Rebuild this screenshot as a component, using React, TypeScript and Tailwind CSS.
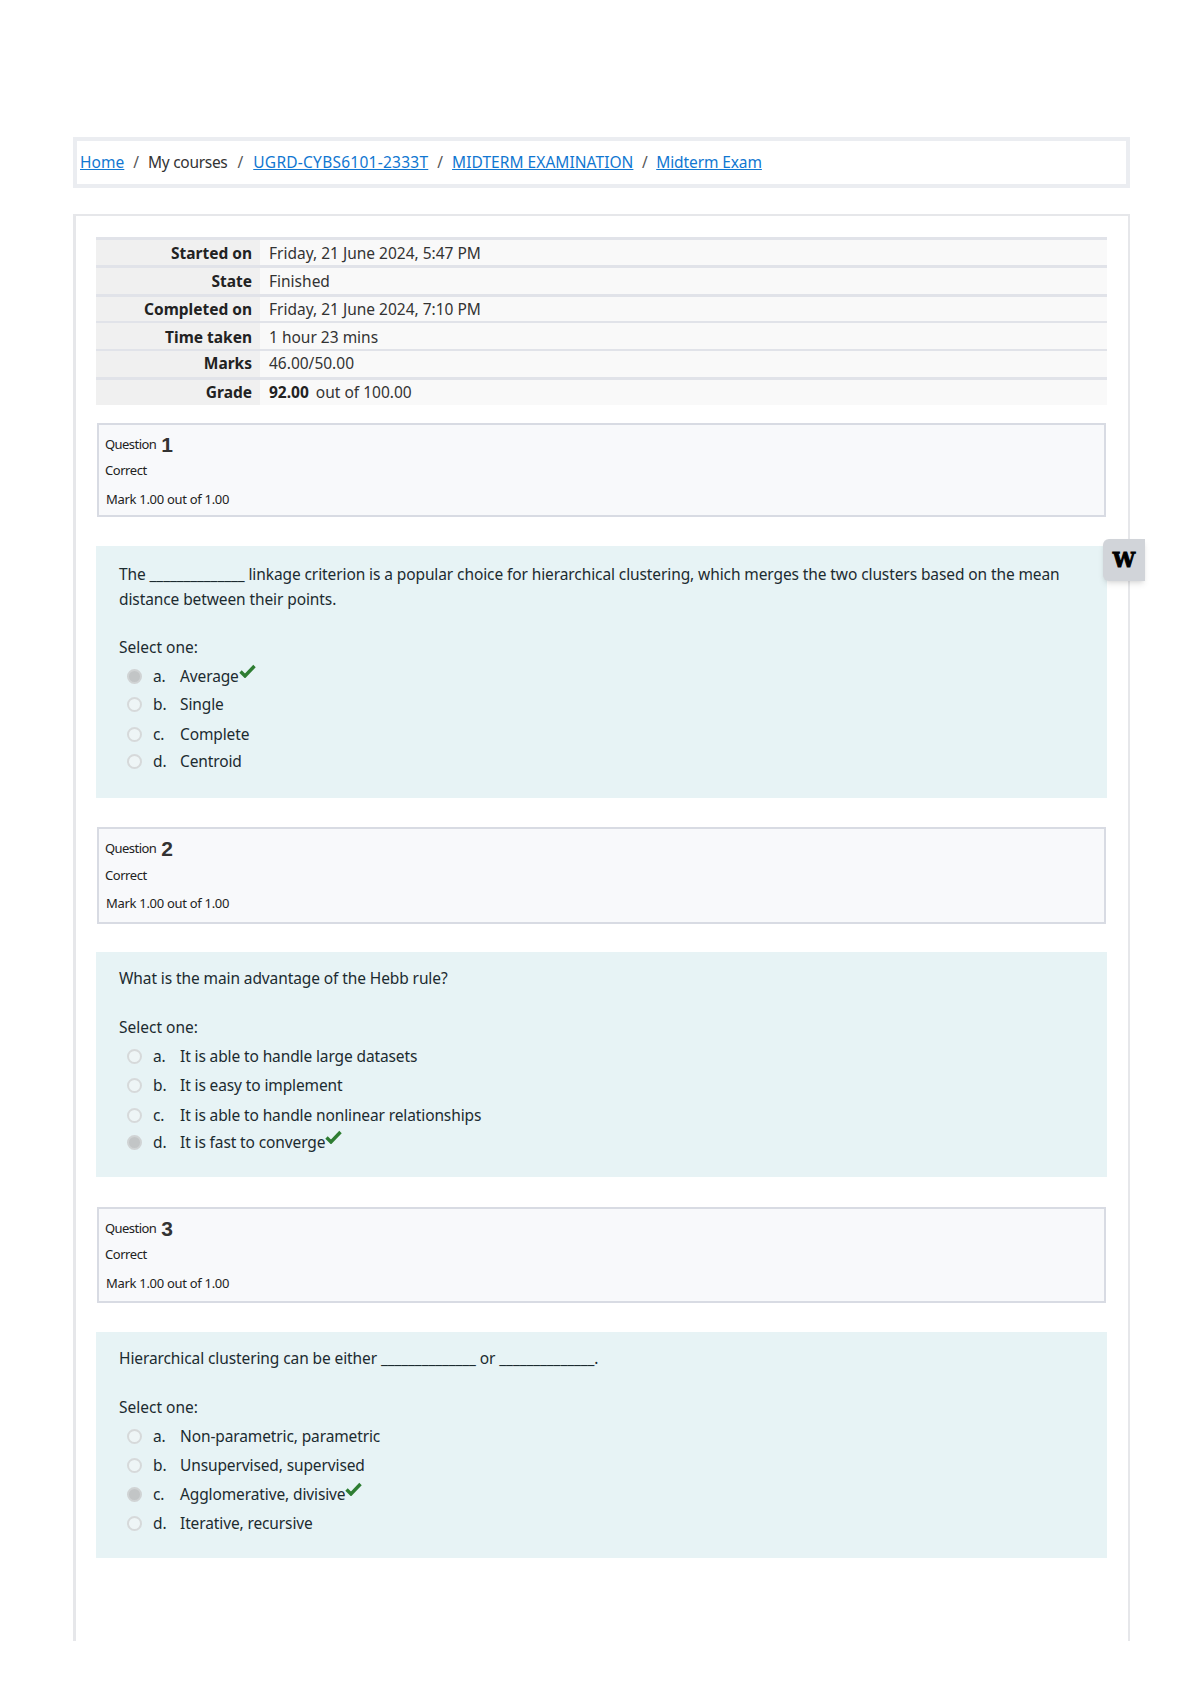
const summary = [
  { label: 'Started on', value: 'Friday, 21 June 2024, 5:47 PM', h: 'h-[28px]', border: 'border-t-[3px]', nudge: 'pt-[2px]' },
  { label: 'State', value: 'Finished', h: 'h-[29px]', border: 'border-t-[3px]', nudge: 'pt-[1px]' },
  { label: 'Completed on', value: 'Friday, 21 June 2024, 7:10 PM', h: 'h-[27px]', border: 'border-t-[3px]', nudge: 'pt-[2px]' },
  { label: 'Time taken', value: '1 hour 23 mins', h: 'h-[28px]', border: 'border-t-[2px]', nudge: 'pt-[3px]' },
  { label: 'Marks', value: '46.00/50.00', h: 'h-[28px]', border: 'border-t-[2px]', nudge: 'pt-0' },
  { label: 'Grade', value: 'grade', h: 'h-[28px]', border: 'border-t-[3px]', nudge: 'pt-0' },
];

const questions = [
  {
    num: 1,
    boxH: 'h-[94px]',
    textH: 'h-[252px]',
    gap: 'mt-[29px] mb-[29px]',
    pad: 'pt-[16px]',
    correctLine: 'h-[26px] leading-[24px]',
    select: 'mt-[23px] mb-[3px]',
    text: (
      <>
        The ______________ linkage criterion is a popular choice for hierarchical clustering, which merges the two clusters based on the mean distance between their points.
      </>
    ),
    options: ['Average', 'Single', 'Complete', 'Centroid'],
    rows: ['mt-[4px]', 'mt-[3px]', 'mt-[5px]', 'mt-[2px]'],
    correct: 0,
  },
  {
    num: 2,
    boxH: 'h-[97px]',
    textH: 'h-[225px]',
    gap: 'mt-[28px] mb-[30px]',
    pad: 'pt-[14px]',
    correctLine: 'h-[26px] leading-[26px]',
    select: 'mt-[24px] mb-[2px]',
    text: <>What is the main advantage of the Hebb rule?</>,
    options: [
      'It is able to handle large datasets',
      'It is easy to implement',
      'It is able to handle nonlinear relationships',
      'It is fast to converge',
    ],
    rows: ['mt-[4px]', 'mt-[4px]', 'mt-[5px]', 'mt-[2px]'],
    correct: 3,
  },
  {
    num: 3,
    boxH: 'h-[96px]',
    textH: 'h-[226px]',
    gap: 'mt-[29px] mb-[29px]',
    pad: 'pt-[14px]',
    correctLine: 'h-[26px] leading-[24px]',
    select: 'mt-[24px] mb-[2px]',
    text: <>Hierarchical clustering can be either ______________ or ______________.</>,
    options: ['Non-parametric, parametric', 'Unsupervised, supervised', 'Agglomerative, divisive', 'Iterative, recursive'],
    rows: ['mt-[4px]', 'mt-[4px]', 'mt-[4px]', 'mt-[4px]'],
    correct: 2,
  },
];

function Check() {
  return (
    <svg width="17" height="14" viewBox="0 0 17 14" className="-mt-[11px] shrink-0">
      <path d="M1.5 7.5 L6 12 L15.5 2" fill="none" stroke="#2e7d32" strokeWidth="3.4" />
    </svg>
  );
}

function Sep({ className = 'mx-[9px]' }: { className?: string }) {
  return <span className={`${className} text-[#555]`}>/</span>;
}

function Question({ q }: { q: (typeof questions)[number] }) {
  const letters = ['a.', 'b.', 'c.', 'd.'];
  return (
    <>
      <div className={`${q.boxH} mx-px border-2 border-[#d8dbe3] bg-[#f8f9fb] pl-[6px] pt-[7px] text-[#222] text-[13px]`}>
        <div className="flex items-center h-[26px] tracking-[-0.55px]">
          Question
          <span className="ml-[5px] -mt-[2px] font-['Liberation_Sans',sans-serif] text-[21px] font-bold leading-none text-[#333] tracking-normal">{q.num}</span>
        </div>
        <div className={`${q.correctLine} tracking-[-0.45px]`}>Correct</div>
        <div className="ml-[1px] h-[26px] leading-[30px] tracking-[-0.3px]">Mark 1.00 out of 1.00</div>
      </div>
      <div className={`${q.textH} ${q.gap} ${q.pad} bg-[#e7f3f5] pl-[23px] pr-[40px] text-[15.5px] leading-[25px] text-[#1c2b30]`}>
        <p className="tracking-[-0.1px]">{q.text}</p>
        <p className={q.select}>Select one:</p>
        {q.options.map((o, i) => (
          <div key={o} className={`flex items-center h-[25px] tracking-[-0.12px] ${q.rows[i]}`}>
            <span className={`ml-[8px] w-[15px] h-[15px] rounded-full border-2 ${i === q.correct ? 'border-[#d0d3d4] bg-[#c2c5c6]' : 'border-[#d6d9da] bg-[#eef5f6]'}`} />
            <span className="ml-[11px] w-[27px]">{letters[i]}</span>
            <span>{o}</span>
            {i === q.correct && <Check />}
          </div>
        ))}
      </div>
    </>
  );
}

export default function App() {
  return (
    <div className="relative w-[1200px] h-[1698px] bg-white overflow-hidden font-['Noto_Sans','Open_Sans',sans-serif] text-[15.5px]">
      <div className="pt-[137px] pl-[73px] w-[1130px]">
        <div className="h-[51px] border-4 border-[#ebedf1] flex items-center pl-[3px] text-[#333]">
          <a className="text-[#1177d1] underline tracking-[0.05px]">Home</a>
          <Sep />
          <span className="tracking-[-0.3px]">My courses</span>
          <Sep className="mx-[10px]" />
          <a className="text-[#1177d1] underline tracking-[0.25px]">UGRD-CYBS6101-2333T</a>
          <Sep />
          <a className="text-[#1177d1] underline tracking-[0.05px]">MIDTERM EXAMINATION</a>
          <Sep className="mx-[8.5px]" />
          <a className="text-[#1177d1] underline tracking-[-0.1px]">Midterm Exam</a>
        </div>

        <div className="mt-[26px] h-[1427px] border-t-2 border-l-[3px] border-r-[2px] border-[#e6e7ea] pt-[21px] pl-[20px] pr-[21px]">
          <div className="mb-[18px]">
            {summary.map((row) => (
              <div key={row.label} className={`flex ${row.h} ${row.border} border-[#e1e3e9] items-center`}>
                <div className={`w-[164px] h-full bg-[#f0f0f0] flex items-center justify-end pr-[8px] font-bold text-[#222] ${row.nudge}`}>{row.label}</div>
                <div className={`flex-1 h-full bg-[#f9f9f9] flex items-center pl-[9px] text-[#333] ${row.nudge}`}>
                  {row.value === 'grade' ? (
                    <>
                      <b className="text-[#222]">92.00</b>
                      <span className="ml-[7px]">out of 100.00</span>
                    </>
                  ) : (
                    row.value
                  )}
                </div>
              </div>
            ))}
          </div>
          {questions.map((q) => (
            <Question key={q.num} q={q} />
          ))}
        </div>
      </div>

      <div className="absolute left-[1103px] top-[539px] w-[42px] h-[42px] bg-[#d1d4d9] rounded-l-[6px] shadow-md flex items-center justify-center font-['DejaVu_Serif',serif] font-bold text-[20px] text-black [-webkit-text-stroke:1px_black]">
        W
      </div>
    </div>
  );
}
